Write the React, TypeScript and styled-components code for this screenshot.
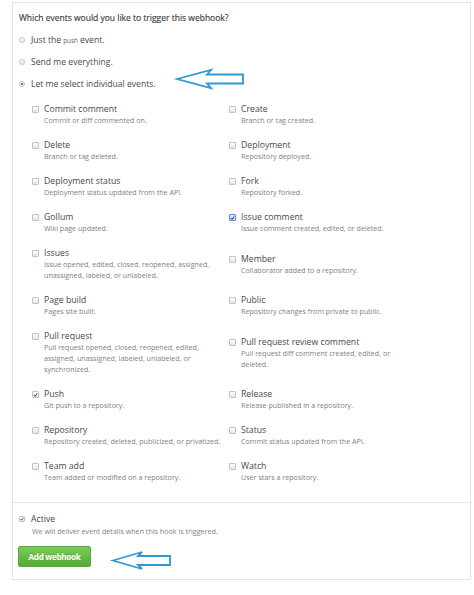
import React from "react";
import styled, { createGlobalStyle } from "styled-components";

const Global = createGlobalStyle`
  html, body { margin: 0; padding: 0; background: #fff; }
  body { font-family: "Open Sans", "Noto Sans", "Liberation Sans", sans-serif; color: #333; }
  * { box-sizing: border-box; }
`;

const Page = styled.div`
  position: relative;
  width: 474px;
  height: 595px;
  padding: 2px 3px 0 12px;
`;

const Box = styled.div`
  border: 1px solid #e3e3e3;
  background: #fff;
`;

const Section = styled.div`
  padding: 8px 6px 19px 6px;
`;

const Footer = styled.div`
  border-top: 1px solid #e6e6e6;
  padding: 9px 6px 12px 6px;
`;

const Question = styled.div`
  font-size: 8.5px;
  font-weight: 500;
  line-height: 14px;
  color: #3c3c3c;
  margin-bottom: 8px;
  -webkit-text-stroke: 0.15px #3c3c3c;
`;

const RadioRow = styled.label`
  display: flex;
  align-items: center;
  gap: 6px;
  height: 14px;
  font-size: 8.6px;
  color: #4a4a4a;
  margin-bottom: 8px;
  &:last-child { margin-bottom: 0; }
`;

const Radio = styled.span<{ $on?: boolean }>`
  width: 6px;
  height: 6px;
  border-radius: 50%;
  border: 1px solid #c4c4c4;
  background: linear-gradient(#fdfdfd, #e8e8e8);
  display: flex;
  align-items: center;
  justify-content: center;
  flex: none;
  &::after {
    content: "";
    width: 2px;
    height: 2px;
    border-radius: 50%;
    background: ${(p) => (p.$on ? "#555" : "transparent")};
  }
`;

const Code = styled.span`
  font-size: 6.4px;
  color: #666;
  margin: 0 2px;
`;

const Grid = styled.div`
  display: grid;
  grid-template-columns: 197px 197px;
  row-gap: 13px;
  align-items: center;
  margin: 12px 0 0 13px;
`;

const Item = styled.div`
  display: flex;
  align-items: flex-start;
  gap: 5px;
`;

const Check = styled.span<{ $on?: boolean; $focus?: boolean }>`
  width: 7px;
  height: 7px;
  margin-top: 3px;
  flex: none;
  border-radius: 1px;
  border: 1px solid ${(p) => (p.$focus ? "#5b8fd6" : "#c2c2c2")};
  background: ${(p) => (p.$focus ? "linear-gradient(#dbe8fb, #b9d0f2)" : "linear-gradient(#fdfdfd, #e6e6e6)")};
  display: flex;
  align-items: center;
  justify-content: center;
  svg { display: ${(p) => (p.$on ? "block" : "none")}; }
`;

const Texts = styled.div`
  display: flex;
  flex-direction: column;
`;

const Title = styled.span`
  font-size: 8.7px;
  line-height: 12px;
  color: #484848;
  white-space: nowrap;
`;

const Desc = styled.span`
  font-size: 7.15px;
  line-height: 11px;
  color: #818181;
  white-space: nowrap;
`;

const ActiveRow = styled.div`
  display: flex;
  align-items: center;
  gap: 6px;
  height: 14px;
  font-size: 8.7px;
  color: #484848;
`;

const ActiveCheck = styled(Check)`
  margin-top: 0;
  width: 6px;
  height: 6px;
`;

const ActiveDesc = styled(Desc)`
  display: block;
  padding-left: 13px;
`;

const Button = styled.button`
  margin: 9px 0 0 -1px;
  width: 73px;
  height: 21px;
  border: 1px solid #5ca941;
  border-radius: 2px;
  background: linear-gradient(#79cf55, #56a836);
  color: #fff;
  font-family: "Open Sans", "Noto Sans", sans-serif;
  font-weight: 700;
  font-size: 8.1px;
  letter-spacing: -0.3px;
  padding: 0;
  text-shadow: 0 -1px 0 rgba(0, 0, 0, 0.15);
`;

const ArrowSvg = styled.svg`
  position: absolute;
  overflow: visible;
  pointer-events: none;
`;

const Tick = () => (
  <svg width="6" height="6" viewBox="0 0 6 6">
    <path d="M1 3.2 L2.4 4.6 L5 1.4" fill="none" stroke="#333" strokeWidth="1.2" />
  </svg>
);

type Ev = { t: string; d: string[]; on?: boolean; focus?: boolean };

const events: Ev[][] = [
  [
    { t: "Commit comment", d: ["Commit or diff commented on."] },
    { t: "Create", d: ["Branch or tag created."] },
  ],
  [
    { t: "Delete", d: ["Branch or tag deleted."] },
    { t: "Deployment", d: ["Repository deployed."] },
  ],
  [
    { t: "Deployment status", d: ["Deployment status updated from the API."] },
    { t: "Fork", d: ["Repository forked."] },
  ],
  [
    { t: "Gollum", d: ["Wiki page updated."] },
    { t: "Issue comment", d: ["Issue comment created, edited, or deleted."], on: true, focus: true },
  ],
  [
    { t: "Issues", d: ["Issue opened, edited, closed, reopened, assigned,", "unassigned, labeled, or unlabeled."] },
    { t: "Member", d: ["Collaborator added to a repository."] },
  ],
  [
    { t: "Page build", d: ["Pages site built."] },
    { t: "Public", d: ["Repository changes from private to public."] },
  ],
  [
    {
      t: "Pull request",
      d: ["Pull request opened, closed, reopened, edited,", "assigned, unassigned, labeled, unlabeled, or", "synchronized."],
    },
    { t: "Pull request review comment", d: ["Pull request diff comment created, edited, or", "deleted."] },
  ],
  [
    { t: "Push", d: ["Git push to a repository."], on: true },
    { t: "Release", d: ["Release published in a repository."] },
  ],
  [
    { t: "Repository", d: ["Repository created, deleted, publicized, or privatized."] },
    { t: "Status", d: ["Commit status updated from the API."] },
  ],
  [
    { t: "Team add", d: ["Team added or modified on a repository."] },
    { t: "Watch", d: ["User stars a repository."] },
  ],
];

const Arrow = ({ x, y, pts }: { x: number; y: number; pts: number[][] }) => {
  const xs = pts.map((p) => p[0]);
  const ys = pts.map((p) => p[1]);
  const w = Math.max(...xs) - x + 4;
  const h = Math.max(...ys) - y + 4;
  return (
    <ArrowSvg style={{ left: x, top: y }} width={w} height={h} viewBox={`${x} ${y} ${w} ${h}`}>
      <polygon
        points={pts.map((p) => p.join(",")).join(" ")}
        fill="none"
        stroke="#2b9ad6"
        strokeWidth="1.8"
        strokeLinejoin="miter"
      />
    </ArrowSvg>
  );
};

export default function App() {
  return (
    <Page>
      <Global />
      <Box>
        <Section>
          <Question>Which events would you like to trigger this webhook?</Question>
          <RadioRow>
            <Radio />
            <span>
              Just the<Code>push</Code>event.
            </span>
          </RadioRow>
          <RadioRow>
            <Radio />
            <span>Send me everything.</span>
          </RadioRow>
          <RadioRow>
            <Radio $on />
            <span>Let me select individual events.</span>
          </RadioRow>
          <Grid>
            {events.flat().map((e) => (
              <Item key={e.t}>
                <Check $on={e.on} $focus={e.focus}>
                  <Tick />
                </Check>
                <Texts>
                  <Title>{e.t}</Title>
                  {e.d.map((l) => (
                    <Desc key={l}>{l}</Desc>
                  ))}
                </Texts>
              </Item>
            ))}
          </Grid>
        </Section>
        <Footer>
          <ActiveRow>
            <ActiveCheck $on>
              <Tick />
            </ActiveCheck>
            <span>Active</span>
          </ActiveRow>
          <ActiveDesc>We will deliver event details when this hook is triggered.</ActiveDesc>
          <Button>Add webhook</Button>
        </Footer>
      </Box>
      <Arrow
        x={174}
        y={67}
        pts={[
          [177, 79],
          [211, 70],
          [207, 74.5],
          [243, 74.5],
          [243, 83.5],
          [207, 83.5],
          [211, 88],
        ]}
      />
      <Arrow
        x={110}
        y={549}
        pts={[
          [113, 560.5],
          [142, 552],
          [138, 556],
          [170, 556],
          [170, 565],
          [138, 565],
          [142, 569],
        ]}
      />
    </Page>
  );
}
